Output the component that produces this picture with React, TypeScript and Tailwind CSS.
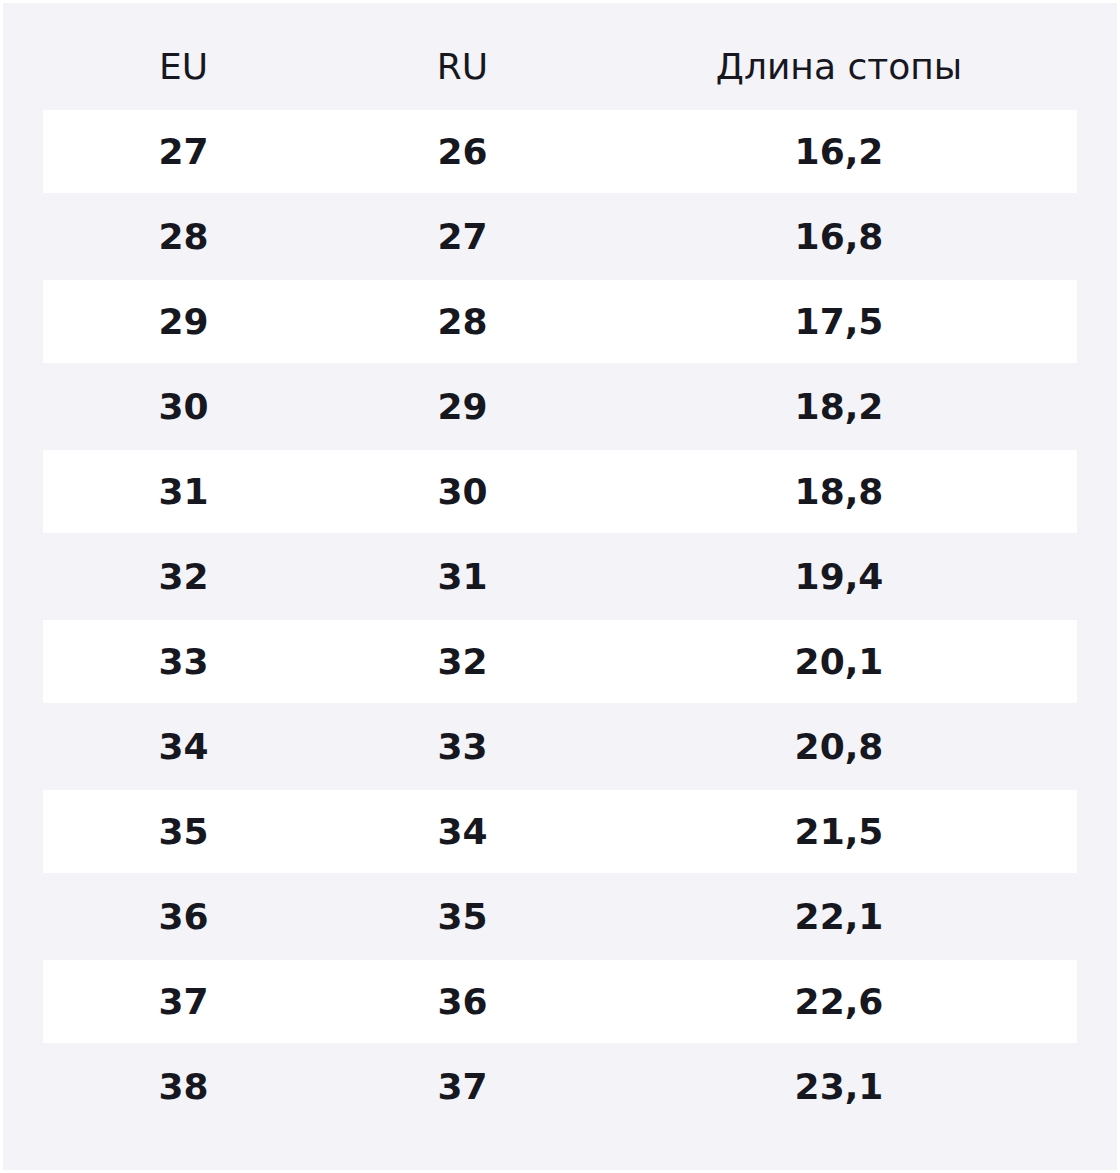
import React from "react";

const rows: [string, string, string][] = [
  ["27", "26", "16,2"],
  ["28", "27", "16,8"],
  ["29", "28", "17,5"],
  ["30", "29", "18,2"],
  ["31", "30", "18,8"],
  ["32", "31", "19,4"],
  ["33", "32", "20,1"],
  ["34", "33", "20,8"],
  ["35", "34", "21,5"],
  ["36", "35", "22,1"],
  ["37", "36", "22,6"],
  ["38", "37", "23,1"],
];

export default function App() {
  return (
    <div className="w-[1120px] h-[1173px] bg-white p-[3px]" style={{ fontFamily: '"DejaVu Sans", sans-serif' }}>
      <div className="bg-[#f3f3f8] h-[1167px] w-[1114px] px-[40px] pt-[40px] pb-[40px] text-[#17171f]">
        <div className="grid grid-cols-[281px_277px_476px] h-[67px] pt-[6px] text-[36px] leading-none font-normal">
          <div className="text-center">EU</div>
          <div className="text-center">RU</div>
          <div className="text-center">Длина стопы</div>
        </div>
        {rows.map((r, i) => (
          <div
            key={i}
            className={
              i % 2 === 0
                ? "grid grid-cols-[281px_277px_476px] items-center h-[83px] bg-white text-[36px] leading-none font-bold"
                : "grid grid-cols-[281px_277px_476px] items-center h-[87px] text-[36px] leading-none font-bold"
            }
          >
            <div className="text-center">{r[0]}</div>
            <div className="text-center">{r[1]}</div>
            <div className="text-center">{r[2]}</div>
          </div>
        ))}
      </div>
    </div>
  );
}
